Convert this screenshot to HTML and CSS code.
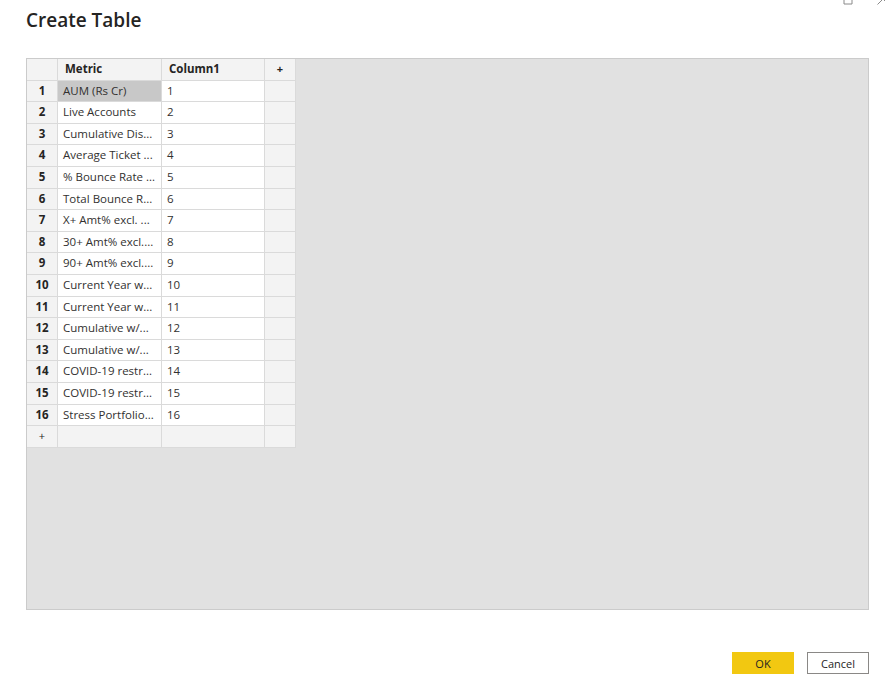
FILE: index.html
```html
<!DOCTYPE html>
<html>
<head>
<meta charset="utf-8">
<link rel="stylesheet" href="styles.css">
</head>
<body>
<div class="dialog">
  <div class="winctl">
    <svg class="ctl-max" width="10" height="6" viewBox="0 0 10 6"><path d="M1 0 V5 H9 V0" fill="none" stroke="#8a8a8a" stroke-width="1"/></svg>
    <svg class="ctl-close" width="9" height="6" viewBox="0 0 9 6"><path d="M0.5 5.5 L6 0 M6 0 L9 3" fill="none" stroke="#8a8a8a" stroke-width="1"/></svg>
  </div>
  <h1 class="title">Create Table</h1>
  <div class="canvas">
    <div class="grid">
      <div class="cell corner"></div>
      <div class="cell head">Metric</div>
      <div class="cell head">Column1</div>
      <div class="cell head plus">+</div>

      <div class="cell num">1</div><div class="cell txt sel">AUM (Rs Cr)</div><div class="cell txt">1</div><div class="cell blank"></div>
      <div class="cell num">2</div><div class="cell txt">Live Accounts</div><div class="cell txt">2</div><div class="cell blank"></div>
      <div class="cell num">3</div><div class="cell txt">Cumulative Dis...</div><div class="cell txt">3</div><div class="cell blank"></div>
      <div class="cell num">4</div><div class="cell txt">Average Ticket ...</div><div class="cell txt">4</div><div class="cell blank"></div>
      <div class="cell num">5</div><div class="cell txt">% Bounce Rate ...</div><div class="cell txt">5</div><div class="cell blank"></div>
      <div class="cell num">6</div><div class="cell txt">Total Bounce R...</div><div class="cell txt">6</div><div class="cell blank"></div>
      <div class="cell num">7</div><div class="cell txt">X+ Amt% excl. ...</div><div class="cell txt">7</div><div class="cell blank"></div>
      <div class="cell num">8</div><div class="cell txt">30+ Amt% excl....</div><div class="cell txt">8</div><div class="cell blank"></div>
      <div class="cell num">9</div><div class="cell txt">90+ Amt% excl....</div><div class="cell txt">9</div><div class="cell blank"></div>
      <div class="cell num">10</div><div class="cell txt">Current Year w...</div><div class="cell txt">10</div><div class="cell blank"></div>
      <div class="cell num">11</div><div class="cell txt">Current Year w...</div><div class="cell txt">11</div><div class="cell blank"></div>
      <div class="cell num">12</div><div class="cell txt">Cumulative w/...</div><div class="cell txt">12</div><div class="cell blank"></div>
      <div class="cell num">13</div><div class="cell txt">Cumulative w/...</div><div class="cell txt">13</div><div class="cell blank"></div>
      <div class="cell num">14</div><div class="cell txt">COVID-19 restr...</div><div class="cell txt">14</div><div class="cell blank"></div>
      <div class="cell num">15</div><div class="cell txt">COVID-19 restr...</div><div class="cell txt">15</div><div class="cell blank"></div>
      <div class="cell num">16</div><div class="cell txt">Stress Portfolio...</div><div class="cell txt">16</div><div class="cell blank"></div>

      <div class="cell num plusrow">+</div><div class="cell blank"></div><div class="cell blank"></div><div class="cell blank"></div>
    </div>
  </div>
  <div class="actions">
    <button class="btn ok">OK</button>
    <button class="btn cancel">Cancel</button>
  </div>
</div>
</body>
</html>
```
FILE: styles.css
```css
html, body {
  margin: 0;
  padding: 0;
  background: #ffffff;
}
body {
  font-family: "Open Sans", "Noto Sans", "Liberation Sans", sans-serif;
  color: #252423;
}
.dialog {
  position: relative;
  width: 885px;
  height: 678px;
  padding: 0 16px 0 26px;
  box-sizing: border-box;
  display: flex;
  flex-direction: column;
}
.winctl {
  position: absolute;
  top: 0;
  right: 0;
  height: 6px;
  width: 60px;
}
.ctl-max {
  position: absolute;
  left: 18px;
  top: -1px;
}
.ctl-close {
  position: absolute;
  left: 52px;
  top: -1px;
}
.title {
  margin: 5px 0 0 0;
  font-size: 19px;
  font-weight: 600;
  line-height: 30px;
  height: 30px;
  letter-spacing: 0;
  color: #252423;
}
.canvas {
  margin-top: 23px;
  height: 552px;
  width: 843px;
  box-sizing: border-box;
  background: #e1e1e1;
  border: 1px solid #cbcbcb;
}
.grid {
  display: grid;
  grid-template-columns: 31px 104px 103px 31px;
  grid-auto-rows: 21.6px;
  width: max-content;
}
.cell {
  box-sizing: border-box;
  border-right: 1px solid #dadada;
  border-bottom: 1px solid #dadada;
  font-size: 11.5px;
  line-height: 20px;
  white-space: nowrap;
  overflow: hidden;
  background: #ffffff;
  color: #323130;
}
.corner, .head, .num, .blank {
  background: #f3f3f3;
}
.head {
  font-weight: 700;
  color: #252423;
  padding-left: 7px;
}
.head.plus {
  padding-left: 0;
  text-align: center;
  font-weight: 700;
  font-size: 11px;
}
.num {
  text-align: center;
  font-weight: 700;
  color: #252423;
  font-size: 11.5px;
}
.plusrow {
  font-weight: 400;
  font-size: 11px;
}
.txt {
  padding-left: 5px;
}
.sel {
  background: #c8c8c8;
}
.actions {
  display: flex;
  justify-content: flex-end;
  gap: 13px;
  margin-top: 42px;
}
.btn {
  width: 62px;
  height: 22px;
  box-sizing: border-box;
  font-family: "Open Sans", "Noto Sans", "Liberation Sans", sans-serif;
  font-size: 11px;
  padding: 0;
  color: #252423;
  cursor: pointer;
}
.ok {
  background: #f2c811;
  border: 1px solid #f2c811;
}
.cancel {
  background: #ffffff;
  border: 1px solid #8a8886;
}
```
